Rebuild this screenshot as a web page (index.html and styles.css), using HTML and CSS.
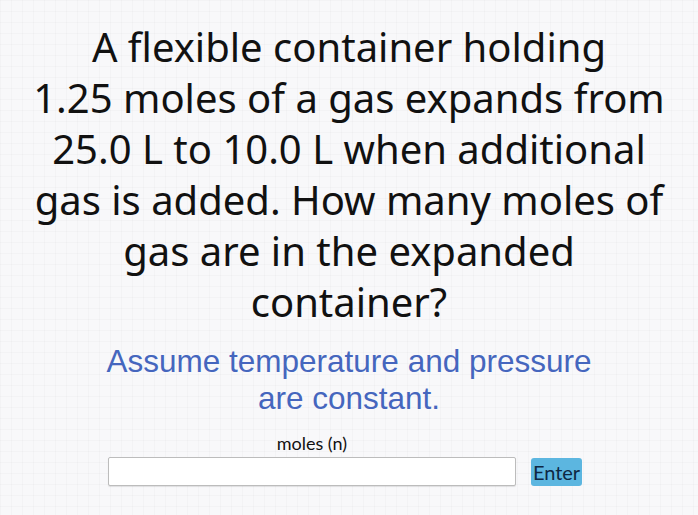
FILE: index.html
```html
<!DOCTYPE html>
<html>
<head>
<meta charset="utf-8">
<link rel="stylesheet" href="styles.css">
</head>
<body>
<main class="page">
  <h1 class="question">A flexible container holding<br>1.25 moles of a gas expands from<br>25.0 L to 10.0 L when additional<br>gas is added. How many moles of<br>gas are in the expanded<br>container?</h1>
  <p class="note">Assume temperature and pressure<br>are constant.</p>
  <form class="answer">
    <div class="field">
      <label class="label" for="n">moles (n)</label>
      <input class="input" id="n" type="text">
    </div>
    <button class="enter" type="button">Enter</button>
  </form>
</main>
</body>
</html>
```

FILE: styles.css
```css
html, body {
  margin: 0;
  padding: 0;
}
body {
  width: 698px;
  height: 515px;
  overflow: hidden;
  background-color: #f8f8fa;
  background-image:
    linear-gradient(to right, rgba(0,0,0,0.018) 1px, transparent 1px),
    linear-gradient(to bottom, rgba(0,0,0,0.018) 1px, transparent 1px);
  background-size: 11px 11px;
}
.page {
  display: flex;
  flex-direction: column;
  align-items: center;
  padding-top: 21px;
}
.question {
  margin: 0;
  font-family: "Noto Sans", sans-serif;
  font-weight: 400;
  font-size: 40px;
  line-height: 51px;
  color: #111;
  text-align: center;
}
.note {
  margin: 16px 0 0;
  font-family: "Liberation Sans", Arial, sans-serif;
  font-size: 31.5px;
  line-height: 37px;
  color: #4566be;
  text-align: center;
}
.answer {
  display: flex;
  align-items: flex-end;
  gap: 15px;
  margin-top: 15px;
  margin-right: 8px;
}
.field {
  display: flex;
  flex-direction: column;
  align-items: center;
  gap: 3px;
}
.label {
  font-family: Lato, sans-serif;
  font-size: 18px;
  color: #111;
}
.input {
  width: 406px;
  height: 27px;
  margin: 0;
  border: 1px solid #bcbcbc;
  border-radius: 2px;
  background: #fff;
  box-shadow: 0 1px 1px rgba(0,0,0,0.1);
  padding: 0;
}
.enter {
  height: 28px;
  padding: 0 2px;
  border: none;
  border-radius: 3px;
  background: #5cb6e0;
  color: #0e2743;
  font-family: Lato, sans-serif;
  font-size: 20px;
  line-height: 28px;
  margin-bottom: 0;
}
```
